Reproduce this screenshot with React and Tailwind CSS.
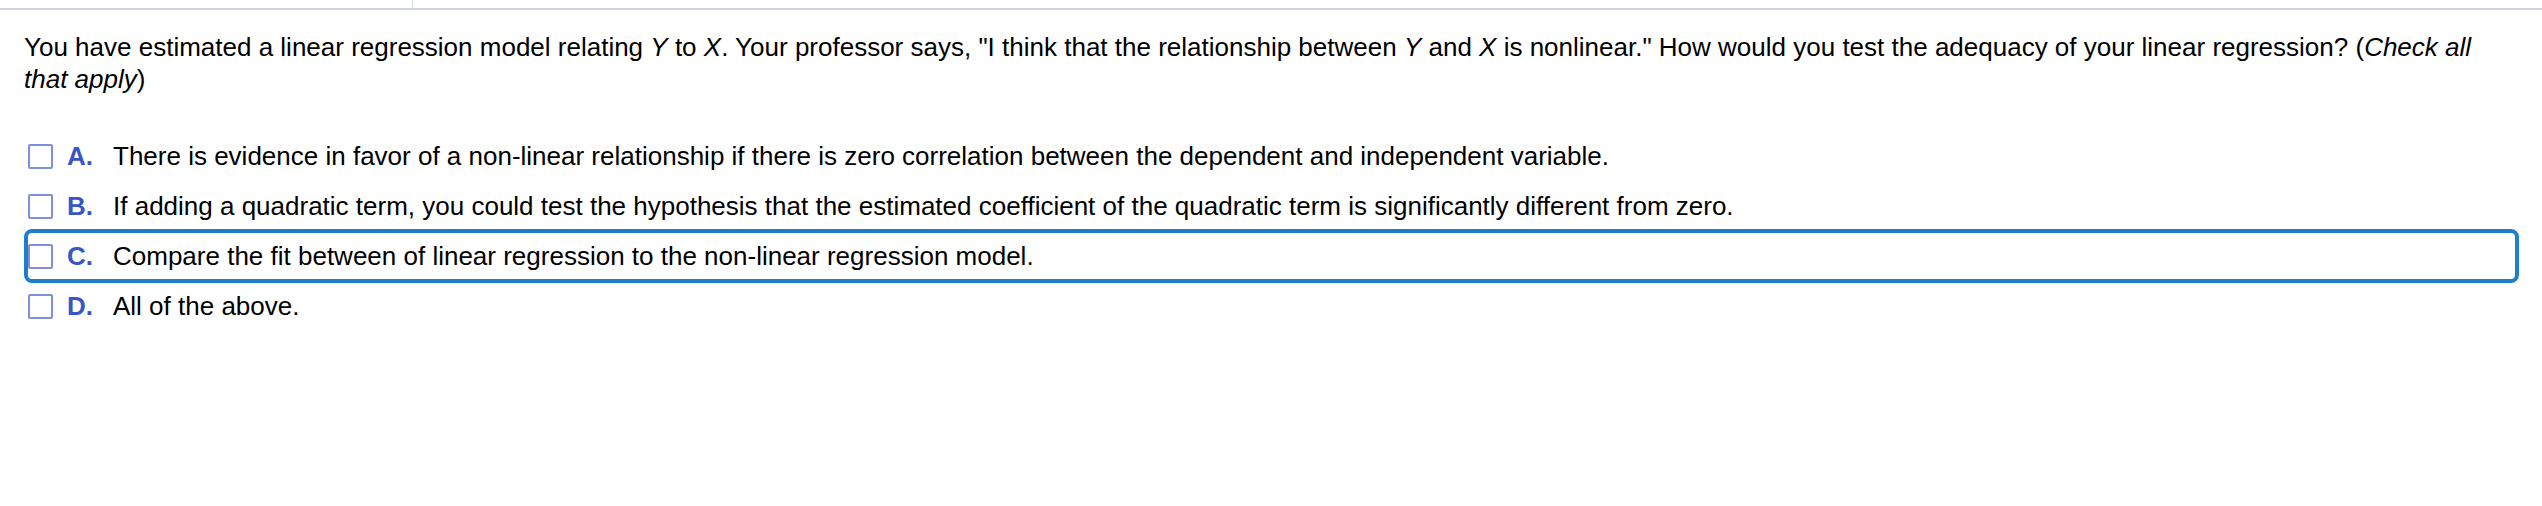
import React from "react";

const options = [
  { key: "A", text: "There is evidence in favor of a non-linear relationship if there is zero correlation between the dependent and independent variable." },
  { key: "B", text: "If adding a quadratic term, you could test the hypothesis that the estimated coefficient of the quadratic term is significantly different from zero." },
  { key: "C", text: "Compare the fit between of linear regression to the non-linear regression model.", focused: true },
  { key: "D", text: "All of the above." },
];

export default function App() {
  return (
    <div className="w-[2542px] h-[506px] bg-white text-black" style={{ fontFamily: '"Liberation Sans", Arial, sans-serif' }}>
      {/* top rule */}
      <div className="relative h-[10px]">
        <div className="absolute left-[412px] top-0 w-px h-[8px] bg-[#d4d6e2]" />
        <div className="absolute left-0 right-0 top-[8px] h-[2px] bg-[#cdd0df]" />
      </div>

      {/* question */}
      <p className="pl-[24px] pr-[40px] pt-[21px] text-[26px] leading-[32px]">
        You have estimated a linear regression model relating <i>Y</i> to <i>X</i>. Your professor says, "I think that the relationship between <i>Y</i> and <i>X</i> is nonlinear." How would you test the adequacy of your linear regression? (<i>Check all that apply</i>)
      </p>

      {/* options */}
      <div className="mt-[38px] flex flex-col gap-[4px] pl-[28px] pr-[27px]">
        {options.map((o) => (
          <div
            key={o.key}
            className={
              "flex items-center h-[46px] " +
              (o.focused ? "outline-4 outline-[#1f7ecb] rounded-[4px]" : "")
            }
          >
            <div className="w-[25px] h-[25px] border-2 border-[#7d8fe0] rounded-[2px] shrink-0" />
            <span className="ml-[14px] w-[46px] shrink-0 font-bold text-[26px] text-[#3a56c6]">{o.key}.</span>
            <span className="text-[26px]">{o.text}</span>
          </div>
        ))}
      </div>
    </div>
  );
}
